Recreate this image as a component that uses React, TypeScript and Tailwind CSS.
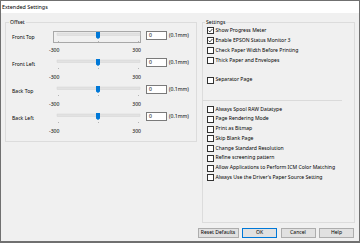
import React from "react";

const offsetRows = [
  { label: "Front Top", focused: true },
  { label: "Front Left", focused: false },
  { label: "Back Top", focused: false },
  { label: "Back Left", focused: false },
];

const topChecks = [
  { label: "Show Progress Meter", checked: true },
  { label: "Enable EPSON Status Monitor 3", checked: true },
  { label: "Check Paper Width Before Printing", checked: false },
  { label: "Thick Paper and Envelopes", checked: false },
];

const lowerChecks = [
  "Always Spool RAW Datatype",
  "Page Rendering Mode",
  "Print as Bitmap",
  "Skip Blank Page",
  "Change Standard Resolution",
  "Refine screening pattern",
  "Allow Applications to Perform ICM Color Matching",
  "Always Use the Driver's Paper Source Setting",
];

function Slider({ focused }: { focused: boolean }) {
  return (
    <svg width="88" height="12" viewBox="0 0 88 12" className="shrink-0">
      {focused && (
        <rect x="0.5" y="0.5" width="87" height="11" fill="none" stroke="#a8a8a8" />
      )}
      <rect x="4" y="2" width="83" height="2.5" fill="#e2e2e2" stroke="#d4d4d4" strokeWidth="0.5" />
      <path d="M43 1 h4 v5.5 l-2 1.5 l-2 -1.5 z" fill="#0078d7" />
      <rect x="5" y="10" width="1" height="1" fill="#b4b4b4" />
      <rect x="45" y="10" width="1" height="1" fill="#b4b4b4" />
      <rect x="85" y="10" width="1" height="1" fill="#b4b4b4" />
    </svg>
  );
}

function OffsetRow({ label, focused }: { label: string; focused: boolean }) {
  return (
    <div className="h-[27px]">
      <div className="flex h-[12px] items-start">
        <span className="w-[41px] leading-[12px]">{label}</span>
        <Slider focused={focused} />
        <div className="ml-[5px] h-[9px] w-[21px] border border-[#7a7a7a] bg-white pl-[2px] leading-[7px]">
          0
        </div>
        <span className="ml-[2px] leading-[9px]">(0.1mm)</span>
      </div>
      <div className="ml-[37px] mt-[3px] flex h-[8px] w-[92px] justify-between leading-[8px]">
        <span>-300</span>
        <span>300</span>
      </div>
    </div>
  );
}

function Check({ label, checked }: { label: string; checked: boolean }) {
  return (
    <div className="flex h-[10px] items-center">
      <span className="ml-[4px] flex h-[7px] w-[7px] shrink-0 items-center justify-center border border-[#333333] bg-white">
        {checked && (
          <svg width="5" height="5" viewBox="0 0 5 5">
            <path d="M0.6 2.6 L1.9 3.9 L4.4 1" fill="none" stroke="#222" strokeWidth="0.8" />
          </svg>
        )}
      </span>
      <span className="ml-[1.5px] whitespace-nowrap">{label}</span>
    </div>
  );
}

function Button({ children, primary }: { children: React.ReactNode; primary?: boolean }) {
  return (
    <div
      className={
        "flex h-[10px] items-center justify-center bg-[#e1e1e1] leading-none " +
        (primary ? "w-[35px] border border-[#0078d7]" : "border border-[#adadad]")
      }
    >
      {children}
    </div>
  );
}

export default function App() {
  return (
    <div className="flex h-[243px] w-[360px] flex-col border border-b-2 border-[#707070] bg-[#f0f0f0] font-['Noto_Sans',sans-serif] text-[5.1px] text-black">
      {/* title bar */}
      <div className="flex h-[12px] shrink-0 items-center bg-white pl-[1px] text-[5.4px]">
        Extended Settings
      </div>

      <div className="flex flex-1 flex-col pl-[4px] pr-[4px] pt-[9px]">
        <div className="flex items-start gap-[5px]">
          {/* Offset */}
          <div className="relative h-[120px] w-[192px] border border-[#dcdcdc] pl-[6px] pt-[8px]">
            <span className="absolute -top-[4px] left-[3px] bg-[#f0f0f0] px-[1px] leading-[7px]">
              Offset
            </span>
            {offsetRows.map((r) => (
              <OffsetRow key={r.label} label={r.label} focused={r.focused} />
            ))}
          </div>

          {/* Settings */}
          <div className="relative h-[201px] w-[153px] border border-[#dcdcdc] pt-[2.5px]">
            <span className="absolute -top-[4px] left-[2px] bg-[#f0f0f0] px-[1px] leading-[7px]">
              Settings
            </span>
            {topChecks.map((c) => (
              <Check key={c.label} label={c.label} checked={c.checked} />
            ))}
            <div className="mt-[9.5px]">
              <Check label="Separator Page" checked={false} />
            </div>
            <div className="mt-[14.5px] h-[1px] w-[139px] bg-[#dadada]" />
            <div className="mt-[4px] flex flex-col">
              {lowerChecks.map((l) => (
                <div key={l} className="h-[9.75px]">
                  <Check label={l} checked={false} />
                </div>
              ))}
            </div>
          </div>
        </div>

        <div className="mr-[1px] mt-[5px] flex justify-end gap-[3.5px]">
          <div className="w-[41px]">
            <Button>Reset Defaults</Button>
          </div>
          <Button primary>OK</Button>
          <div className="w-[35px]">
            <Button>Cancel</Button>
          </div>
          <div className="w-[35px]">
            <Button>Help</Button>
          </div>
        </div>
      </div>
    </div>
  );
}
